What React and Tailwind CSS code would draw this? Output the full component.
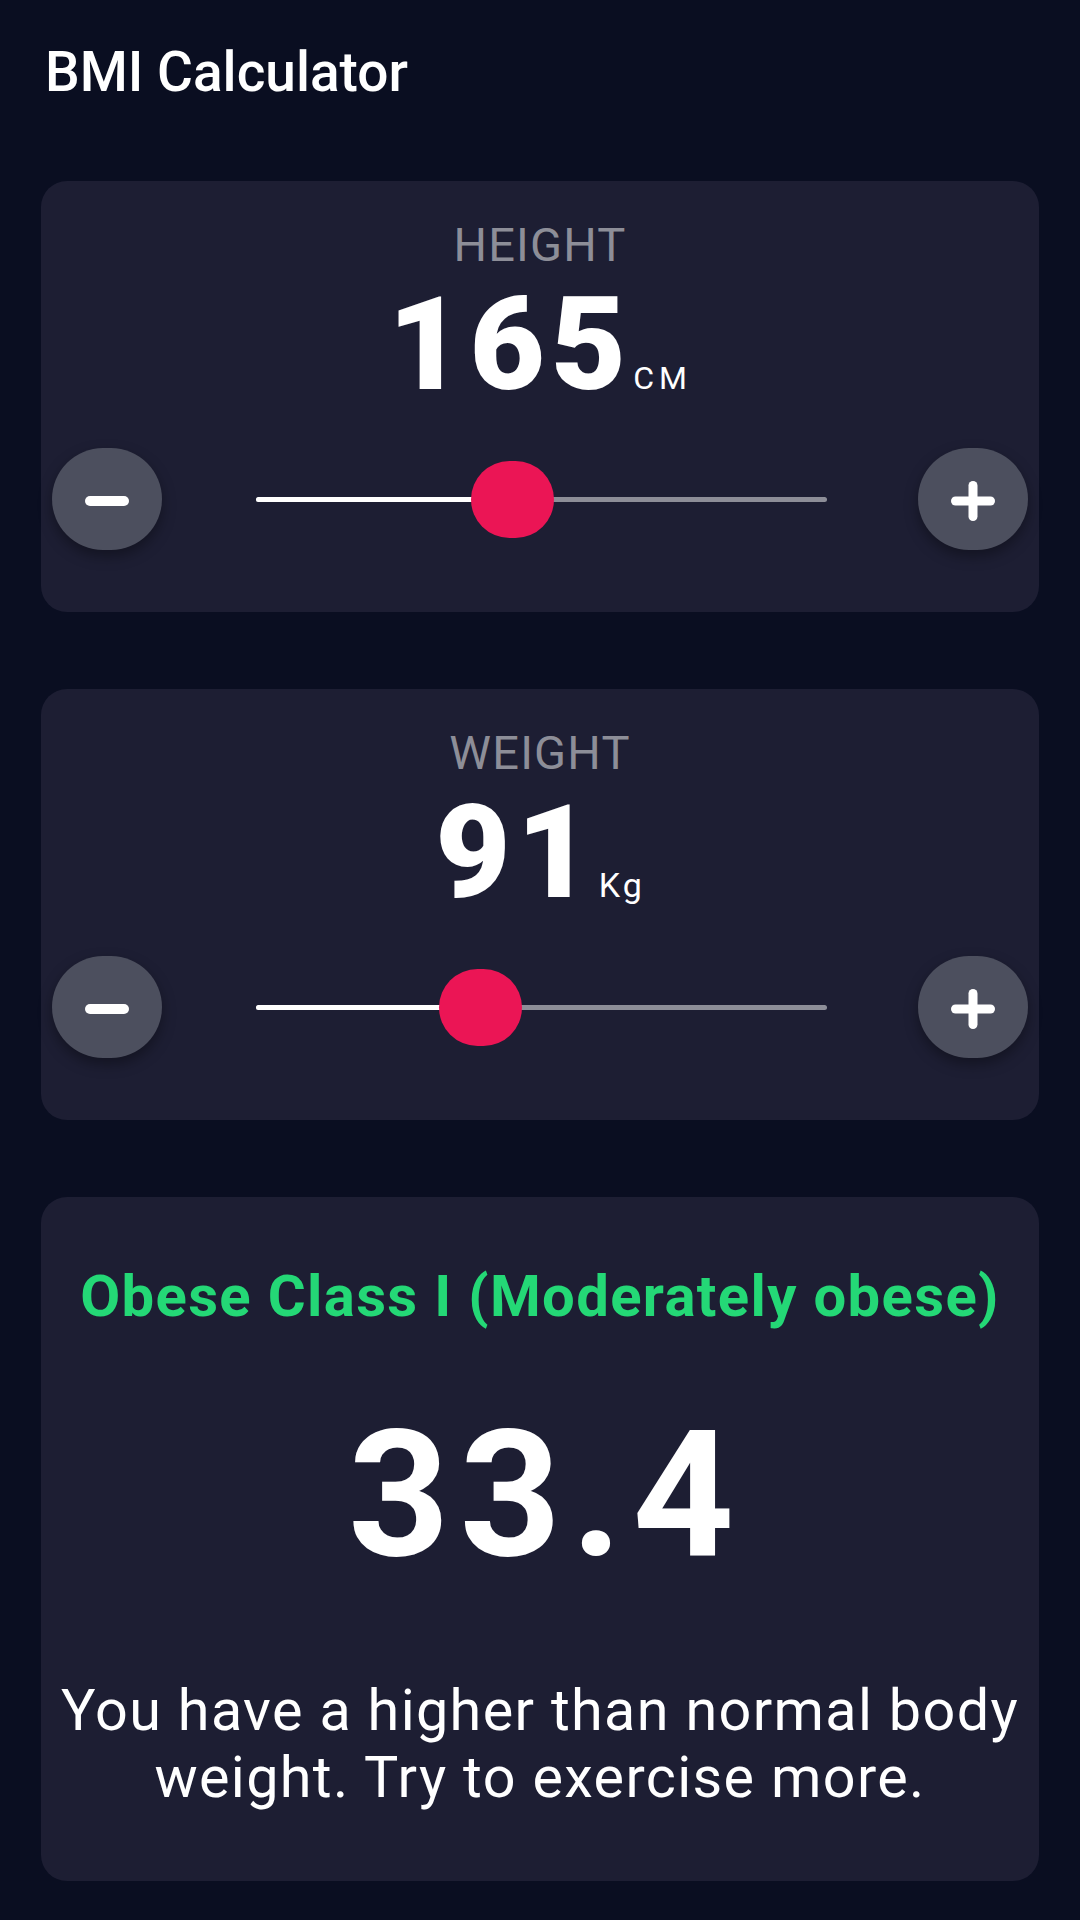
import React, { useState } from 'react';

const PlusIcon = () => (
  <svg width="44" height="40" viewBox="0 0 44 40" className="translate-y-[2px]">
    <line x1="4.5" y1="20" x2="39.5" y2="20" stroke="white" strokeWidth="9" strokeLinecap="round" />
    <line x1="22" y1="4.5" x2="22" y2="35.5" stroke="white" strokeWidth="9" strokeLinecap="round" />
  </svg>
);

const MinusIcon = () => (
  <svg width="44" height="40" viewBox="0 0 44 40" className="translate-y-[2px]">
    <line x1="5" y1="20" x2="39" y2="20" stroke="white" strokeWidth="10" strokeLinecap="round" />
  </svg>
);

const RoundButton = ({ children, onClick }) => (
  <button
    onClick={onClick}
    className="w-[110px] h-[102px] rounded-full bg-[#4C4F5E] flex items-center justify-center shadow-[0_6px_14px_rgba(0,0,0,0.35)] shrink-0"
  >
    {children}
  </button>
);

const Slider = ({ value, min, max }) => {
  const pct = ((value - min) / (max - min)) * 100;
  return (
    <div className="flex-1 pl-[94px] pr-[91px]">
      <div className="relative h-[5px] rounded-full bg-[#8D8E98]">
        <div className="absolute left-0 top-0 h-full rounded-full bg-white" style={{ width: `${pct}%` }} />
        <div
          className="absolute top-1/2 w-[83px] h-[77px] -ml-[41.5px] -mt-[38.5px] rounded-full bg-[#EB1555]"
          style={{ left: `${pct}%` }}
        />
      </div>
    </div>
  );
};

const InputCard = ({ label, value, unit, unitClass, min, max, onChange }) => (
  <div className="h-[431px] rounded-[26px] bg-[#1D1E33] pt-[40px] flex flex-col items-center">
    <div className="text-[47px] leading-none tracking-[1.2px] text-[#8D8E98]">{label}</div>
    <div className="mt-[12px] flex items-baseline">
      <span className="text-[130px] leading-none font-black tracking-[6px] text-white">{value}</span>
      <span className={`${unitClass} leading-none text-white ml-[1px]`}>{unit}</span>
    </div>
    <div className="mt-[38px] w-full px-[11px] flex items-center">
      <RoundButton onClick={() => onChange(Math.max(min, value - 1))}>
        <MinusIcon />
      </RoundButton>
      <Slider value={value} min={min} max={max} />
      <RoundButton onClick={() => onChange(Math.min(max, value + 1))}>
        <PlusIcon />
      </RoundButton>
    </div>
  </div>
);

export default function App() {
  const [height, setHeight] = useState(165);
  const [weight, setWeight] = useState(91);

  const bmi = weight / Math.pow(height / 100, 2);

  return (
    <div className="min-h-screen w-full bg-[#0A0E21] font-['Roboto',sans-serif]">
      <div className="pl-[45px] pt-[45px] text-[55px] leading-none font-medium text-white">BMI Calculator</div>

      <div className="px-[41px] pt-[81px] flex flex-col gap-[77px]">
        <InputCard
          label="HEIGHT"
          value={height}
          unit="CM"
          unitClass="text-[32px] tracking-[5px]"
          min={120}
          max={220}
          onChange={setHeight}
        />
        <InputCard
          label="WEIGHT"
          value={weight}
          unit="Kg"
          unitClass="text-[34px] tracking-[3px]"
          min={40}
          max={170}
          onChange={setWeight}
        />

        {/* Result */}
        <div className="h-[684px] rounded-[26px] bg-[#1D1E33] pt-[70px] px-[10px] flex flex-col items-center text-center">
          <div className="text-[58px] leading-none font-bold tracking-[1.35px] text-[#24D876]">
            Obese Class I (Moderately obese)
          </div>
          <div className="mt-[81px] pl-[12px] text-[177px] leading-none font-bold tracking-[10px] text-white">
            {bmi.toFixed(1)}
          </div>
          <p className="mt-[94px] text-[57.5px] leading-[67px] tracking-[1.35px] text-white">
            You have a higher than normal body weight. Try to exercise more.
          </p>
        </div>
      </div>
    </div>
  );
}
